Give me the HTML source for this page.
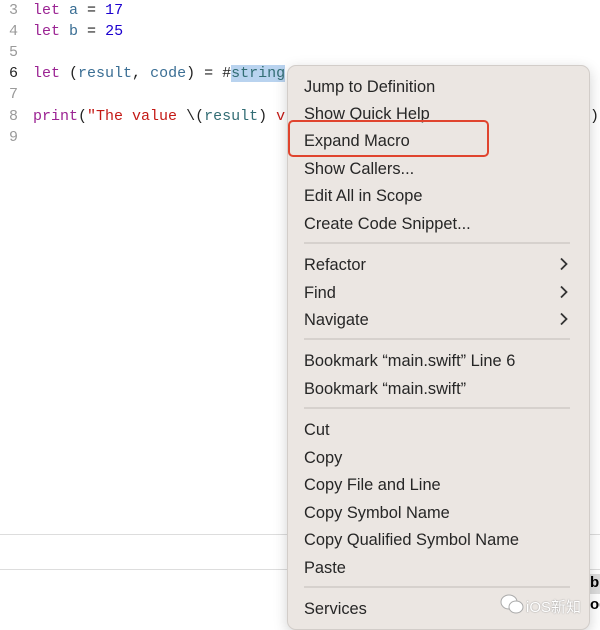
<!DOCTYPE html>
<html><head><style>
body{margin:0;width:600px;height:630px;background:#fff;position:relative;overflow:hidden;font-family:"Liberation Sans",sans-serif}
.ln{position:absolute;left:0;width:18px;text-align:right;font:15px "Liberation Mono",monospace;color:#9a9a9a}
.cd{position:absolute;left:33px;font:15px "Liberation Mono",monospace;color:#222;white-space:pre}
.k{color:#9b2393}.v{color:#3a6e94}.n{color:#1c00cf}.s{color:#c41a16}.t{color:#326d74}
.menu{position:absolute;left:287px;top:65px;width:301px;height:563px;background:#ebe6e2;border:1px solid #d2cdc9;border-radius:9px;box-shadow:0 4px 14px rgba(0,0,0,.18)}
.it{position:absolute;left:304px;font-size:16.4px;color:#262626;line-height:20px;white-space:nowrap}
.sep{position:absolute;left:304px;width:266px;height:2px;background:#d6d1cd}
.ch{position:absolute;left:559px}
</style></head><body>
<div class="ln" style="top:2px">3</div><div class="cd" style="top:2px"><span class="k">let</span> <span class="v">a</span> = <span class="n">17</span></div>
<div class="ln" style="top:23px">4</div><div class="cd" style="top:23px"><span class="k">let</span> <span class="v">b</span> = <span class="n">25</span></div>
<div class="ln" style="top:44px">5</div>
<div class="ln" style="top:65px;color:#222">6</div><div class="cd" style="top:65px"><span class="k">let</span> (<span class="v">result</span>, <span class="v">code</span>) = #<span class="t" style="background:#b9d3ef">string</span></div>
<div class="ln" style="top:86px">7</div>
<div class="ln" style="top:108px">8</div><div class="cd" style="top:108px"><span class="k">print</span>(<span class="s">"The value </span>\(<span class="t">result</span>) <span class="s">v</span></div>
<div style="position:absolute;left:590px;top:108px;font:15px 'Liberation Mono',monospace;color:#222">)</div>
<div class="ln" style="top:129px">9</div>
<div style="position:absolute;left:0;top:534px;width:600px;height:1px;background:#ddd"></div>
<div style="position:absolute;left:0;top:569px;width:600px;height:1px;background:#ddd"></div>
<div style="position:absolute;left:590px;top:574px;width:10px;height:20px;background:#ddd;font-weight:bold;font-size:15px">b</div>
<div style="position:absolute;left:590px;top:596px;font-weight:bold;font-size:15px">od</div>
<div class="menu"></div>
<div class="it" style="top:77px">Jump to Definition</div>
<div class="it" style="top:104px">Show Quick Help</div>
<div class="it" style="top:131px">Expand Macro</div>
<div class="it" style="top:159px">Show Callers...</div>
<div class="it" style="top:186px">Edit All in Scope</div>
<div class="it" style="top:214px">Create Code Snippet...</div>
<div class="sep" style="top:242px"></div>
<div class="it" style="top:255px">Refactor</div>
<div class="it" style="top:283px">Find</div>
<div class="it" style="top:310px">Navigate</div>
<svg class="ch" style="top:257px" width="10" height="14"><path d="M2 1.5 L7.5 7 L2 12.5" fill="none" stroke="#333" stroke-width="1.8"/></svg>
<svg class="ch" style="top:285px" width="10" height="14"><path d="M2 1.5 L7.5 7 L2 12.5" fill="none" stroke="#333" stroke-width="1.8"/></svg>
<svg class="ch" style="top:312px" width="10" height="14"><path d="M2 1.5 L7.5 7 L2 12.5" fill="none" stroke="#333" stroke-width="1.8"/></svg>
<div class="sep" style="top:338px"></div>
<div class="it" style="top:351px">Bookmark “main.swift” Line 6</div>
<div class="it" style="top:379px">Bookmark “main.swift”</div>
<div class="sep" style="top:407px"></div>
<div class="it" style="top:420px">Cut</div>
<div class="it" style="top:448px">Copy</div>
<div class="it" style="top:475px">Copy File and Line</div>
<div class="it" style="top:503px">Copy Symbol Name</div>
<div class="it" style="top:530px">Copy Qualified Symbol Name</div>
<div class="it" style="top:558px">Paste</div>
<div class="sep" style="top:586px"></div>
<div class="it" style="top:599px">Services</div>
<svg style="position:absolute;left:500px;top:593px" width="24" height="22"><ellipse cx="9" cy="9" rx="8" ry="7" fill="#fff" stroke="#aaa"/><ellipse cx="16" cy="14" rx="7" ry="6" fill="#fff" stroke="#aaa"/></svg>
<div style="position:absolute;left:526px;top:596px;font-size:15px;color:#fff;text-shadow:0 0 1.5px #888;font-family:'Liberation Sans','Noto Sans CJK SC',sans-serif">iOS新知</div>
<div style="position:absolute;left:288px;top:120px;width:197px;height:33px;border:2.5px solid #e0442e;border-radius:5px"></div>
</body></html>
